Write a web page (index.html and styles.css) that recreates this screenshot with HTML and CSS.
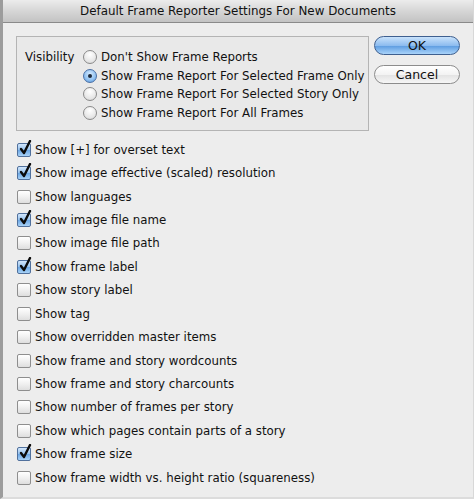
FILE: index.html
```html
<!DOCTYPE html>
<html>
<head>
<meta charset="utf-8">
<link rel="stylesheet" href="styles.css">
</head>
<body>
<div class="window">
  <div class="titlebar">Default Frame Reporter Settings For New Documents</div>
  <div class="content">
    <div class="top">
      <div class="group">
        <div class="vis-label">Visibility</div>
        <div class="radios">
          <div class="radio-row"><span class="radio"></span>Don't Show Frame Reports</div>
          <div class="radio-row"><span class="radio on"></span>Show Frame Report For Selected Frame Only</div>
          <div class="radio-row"><span class="radio"></span>Show Frame Report For Selected Story Only</div>
          <div class="radio-row"><span class="radio"></span>Show Frame Report For All Frames</div>
        </div>
      </div>
      <div class="buttons">
        <div class="btn default">OK</div>
        <div class="btn">Cancel</div>
      </div>
    </div>
    <div class="checks">
      <div class="check-row"><span class="cb on"><svg viewBox="0 0 14 16"><path d="M3 9 L6 13 L12 1" /></svg></span>Show [+] for overset text</div>
      <div class="check-row"><span class="cb on"><svg viewBox="0 0 14 16"><path d="M3 9 L6 13 L12 1" /></svg></span>Show image effective (scaled) resolution</div>
      <div class="check-row"><span class="cb"></span>Show languages</div>
      <div class="check-row"><span class="cb on"><svg viewBox="0 0 14 16"><path d="M3 9 L6 13 L12 1" /></svg></span>Show image file name</div>
      <div class="check-row"><span class="cb"></span>Show image file path</div>
      <div class="check-row"><span class="cb on"><svg viewBox="0 0 14 16"><path d="M3 9 L6 13 L12 1" /></svg></span>Show frame label</div>
      <div class="check-row"><span class="cb"></span>Show story label</div>
      <div class="check-row"><span class="cb"></span>Show tag</div>
      <div class="check-row"><span class="cb"></span>Show overridden master items</div>
      <div class="check-row"><span class="cb"></span>Show frame and story wordcounts</div>
      <div class="check-row"><span class="cb"></span>Show frame and story charcounts</div>
      <div class="check-row"><span class="cb"></span>Show number of frames per story</div>
      <div class="check-row"><span class="cb"></span>Show which pages contain parts of a story</div>
      <div class="check-row"><span class="cb on"><svg viewBox="0 0 14 16"><path d="M3 9 L6 13 L12 1" /></svg></span>Show frame size</div>
      <div class="check-row"><span class="cb"></span>Show frame width vs. height ratio (squareness)</div>
    </div>
  </div>
</div>
</body>
</html>
```

FILE: styles.css
```css
* { box-sizing: border-box; }
html, body { margin: 0; padding: 0; }
body {
  width: 474px;
  height: 499px;
  overflow: hidden;
  background: #ededed;
  font-family: "DejaVu Sans", "Liberation Sans", sans-serif;
  font-size: 11.8px;
  color: #111;
}
.window {
  width: 474px;
  height: 499px;
  border-left: 3px solid #9c9c9c;
  border-right: 1px solid #d8d8d8;
  border-bottom: 2px solid #dcdcdc;
  background: #ededed;
}
.titlebar {
  height: 23px;
  background: linear-gradient(#ececec, #d6d6d6 50%, #c3c3c3);
  border-bottom: 1px solid #8a8a8a;
  text-align: center;
  font-size: 11.9px;
  line-height: 22px;
  color: #111;
}
.content {
  padding: 13px 13px 0 13px;
}
.top {
  display: flex;
  align-items: flex-start;
}
.group {
  width: 354px;
  height: 95px;
  border: 1px solid #b4b4b4;
  background: #e9e9e9;
  display: flex;
  padding: 11px 0 0 8px;
}
.vis-label {
  width: 58px;
  line-height: 18.5px;
  flex: none;
}
.radio-row {
  display: flex;
  align-items: center;
  height: 18.5px;
  white-space: nowrap;
}
.radio {
  width: 14px;
  height: 14px;
  border-radius: 50%;
  border: 1px solid #8a8a8a;
  background: radial-gradient(circle at 50% 30%, #ffffff, #e4e4e4 70%, #cfcfcf);
  margin-right: 4px;
  flex: none;
  position: relative;
}
.radio.on {
  border-color: #4a6fa5;
  background: radial-gradient(circle at 50% 35%, #d6ebff, #8fc0f0 60%, #4f8fd6);
}
.radio.on::after {
  content: "";
  position: absolute;
  left: 4px;
  top: 4px;
  width: 4px;
  height: 4px;
  border-radius: 50%;
  background: #1c2a3c;
}
.buttons {
  margin-left: 5px;
  display: flex;
  flex-direction: column;
  gap: 10px;
}
.btn {
  width: 86px;
  height: 19px;
  border-radius: 10px;
  border: 1px solid #8c8c8c;
  background: linear-gradient(#ffffff, #f3f3f3 50%, #e2e2e2 51%, #f6f6f6);
  text-align: center;
  line-height: 17px;
  font-size: 12.5px;
}
.btn.default {
  border-color: #3e5f8f;
  background: linear-gradient(#c9e2fb, #8dbcef 50%, #5b9be0 51%, #a9d3fa);
}
.checks {
  margin-top: 7px;
  margin-left: 1px;
}
.check-row {
  display: flex;
  align-items: center;
  height: 23.43px;
  white-space: nowrap;
}
.cb {
  width: 14px;
  height: 14px;
  border: 1px solid #8e8e8e;
  border-radius: 2px;
  background: linear-gradient(#ffffff, #f0f0f0 50%, #dedede);
  margin-right: 4px;
  flex: none;
  position: relative;
}
.cb.on {
  border-color: #50709c;
  background: linear-gradient(#d2e6fb, #96c3ef 50%, #6aa6e4 51%, #a8d2f7);
}
.cb svg {
  position: absolute;
  left: 0px;
  top: -4px;
  width: 14px;
  height: 16px;
  fill: none;
  stroke: #0b0b0b;
  stroke-width: 2.4;
  stroke-linecap: round;
  stroke-linejoin: round;
}
```
